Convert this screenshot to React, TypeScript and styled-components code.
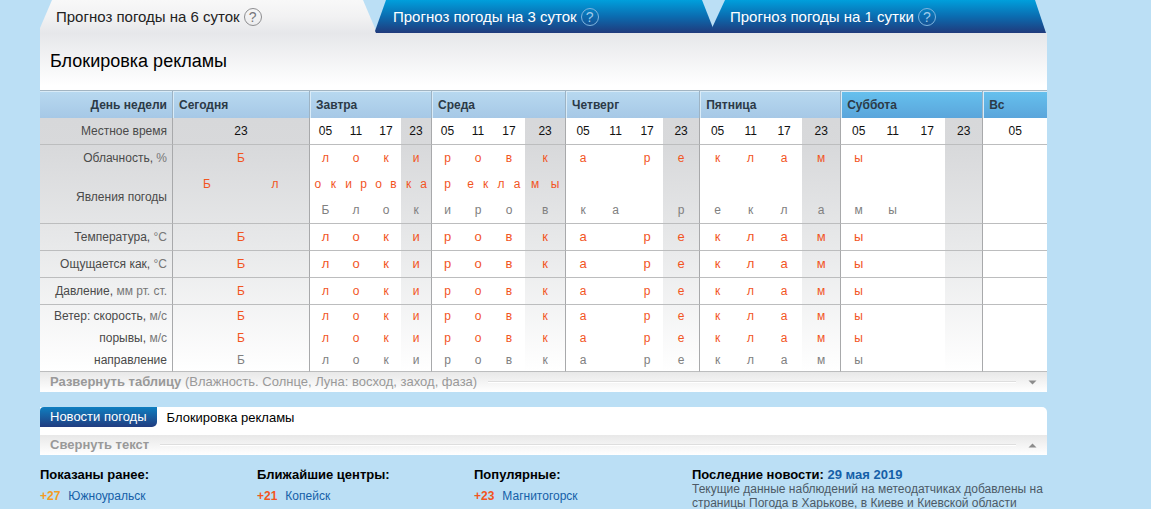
import React from "react";
import styled, { createGlobalStyle, css } from "styled-components";

const GlobalStyle = createGlobalStyle`
  * { box-sizing: border-box; }
  body {
    margin: 0;
    background: #bbdff5;
    color: #000;
    font-family: "Liberation Sans", Arial, sans-serif;
    font-size: 12px;
  }
  a { text-decoration: none; }
  button { font-family: inherit; border: 0; cursor: pointer; }
`;

const Page = styled.div`
  padding: 0 104px 0 40px;
`;

const Tabs = styled.nav`
  display: grid;
  grid-template-columns: 337fr 337fr 333fr;
  height: 33px;
`;

const blueTab = css`
  margin-left: -2px;
  padding-left: 18px;
  color: #fff;
  background: linear-gradient(#009fdc, #0b6cb0 50%, #203a7c);
`;

const Tab = styled.a<{ $kind: "active" | "middle" | "last" }>`
  display: flex;
  align-items: center;
  gap: 4px;
  padding-left: 16px;
  font-size: 15px;
  line-height: 33px;
  white-space: nowrap;
  color: #222;
  ${(p) =>
    p.$kind === "active" &&
    css`
      background: linear-gradient(#f8f8f8, #f2f2f3 50%, #e6e7ea);
      clip-path: polygon(12px 0, calc(100% - 14px) 0, 100% 100%, 0 100%, 0 28px);
    `}
  ${(p) =>
    p.$kind === "middle" &&
    css`
      ${blueTab}
      clip-path: polygon(11px 0, calc(100% - 12px) 0, calc(100% - 1px) 28px, 100% 100%, 1px 100%, 0 31px);
    `}
  ${(p) =>
    p.$kind === "last" &&
    css`
      ${blueTab}
      clip-path: polygon(13px 0, calc(100% - 12px) 0, calc(100% - 1px) 100%, 0 100%, 0 28px);
    `}
`;

const Hint = styled.span<{ $light?: boolean }>`
  display: inline-flex;
  align-items: center;
  justify-content: center;
  width: 18px;
  height: 18px;
  border: 1px solid ${(p) => (p.$light ? "#7fb4de" : "#8d8d8f")};
  border-radius: 50%;
  font-size: 14px;
  line-height: 16px;
  color: ${(p) => (p.$light ? "#9fcbeb" : "#77777a")};
`;

const TitleBar = styled.header`
  display: flex;
  align-items: center;
  height: 57px;
  padding: 0 10px;
  background: linear-gradient(#e6e7ea, #fff 92%);
`;

const Title = styled.h1`
  margin: 0;
  font-size: 18px;
  font-weight: 400;
`;

const Forecast = styled.table`
  width: 100%;
  table-layout: fixed;
  border-collapse: separate;
  border-spacing: 0;
  border-top: 1px solid #a3b5c2;
  background: #fff;
  text-align: center;
  th, td { padding: 0; }
`;

const Column = styled.col<{ $night?: boolean }>`
  ${(p) => p.$night && css`background: linear-gradient(#d6d7d9, #d8d9db 20%, #e8e9ea 55%, #fff);`}
`;

const DayHead = styled.th<{ $weekend?: boolean; $label?: boolean; $last?: boolean }>`
  height: 27px;
  text-align: ${(p) => (p.$label ? "right" : "left")};
  color: #2c3a47;
  font-size: 12px;
  background: ${(p) =>
    p.$weekend ? "linear-gradient(#66c1ee, #5aa5db)" : "linear-gradient(#b8d9f0, #a6c8e6)"};
  border-right: ${(p) => (p.$last ? "0" : "1px solid #9db3c4")};
  box-shadow: inset ${(p) => (p.$label ? "0" : "1px")} 1px 0 #d9ebf7;
  && { padding: ${(p) => (p.$label ? "0 5px 0 0" : "0 0 0 6px")}; }
`;

type Tone = "time" | "warm" | "temp" | "grey";
const toneColor: Record<Tone, string> = { time: "#111", warm: "#f2551f", temp: "#f2551f", grey: "#808080" };

const Row = styled.tr<{ $h: number; $line?: boolean }>`
  height: ${(p) => p.$h}px;
  ${(p) => p.$line && css`td, th { border-bottom: 1px solid #bcbdbe; }`}
`;

const RowLabel = styled.th<{ $line?: boolean }>`
  && {
    padding-right: 5px;
    border-right: 1px solid #a8a9ab;
    ${(p) => p.$line && "border-bottom: 1px solid #bcbdbe;"}
  }
  text-align: right;
  font-weight: 400;
  color: #4a4a4a;
  white-space: nowrap;
`;

const Unit = styled.span`
  color: #777;
`;

const Cell = styled.td<{ $tone: Tone; $edge?: boolean }>`
  color: ${(p) => toneColor[p.$tone]};
  font-size: ${(p) => (p.$tone === "temp" ? 13 : 12)}px;
  line-height: 16px;
  ${(p) => p.$edge && css`border-right: 1px solid #a8a9ab;`}
`;

const Pair = styled.div`
  display: flex;
  span { flex: 1; }
`;

const Strip = styled.button`
  display: flex;
  align-items: center;
  width: 100%;
  height: 20px;
  padding: 0 10px 2px;
  text-align: left;
  color: #999;
  font-size: 13px;
  background: linear-gradient(#e8e8e8, #fff);
  white-space: pre;
`;

const Rule = styled.span`
  flex: 1;
  height: 2px;
  margin: 2px 12px 0 11px;
  border-top: 1px solid #dedede;
  background: #fff;
`;

const News = styled.section`
  margin-top: 15px;
  border-radius: 0 5px 0 0;
  background: #fff;
`;

const NewsLine = styled.div`
  display: flex;
  align-items: flex-start;
  height: 28px;
  font-size: 13px;
  line-height: 20px;
`;

const NewsTag = styled.h2`
  margin: 0 10px 0 0;
  padding: 0 10px;
  font-size: 13px;
  font-weight: 400;
  line-height: 20px;
  color: #fff;
  border-radius: 4px 0 5px 0;
  background: linear-gradient(#0f7fc0, #213c80);
`;

const NewsText = styled.span`
  line-height: 22px;
`;

const Footer = styled.footer`
  display: grid;
  grid-template-columns: 217fr 217fr 218fr 355fr;
  padding-top: 12px;
`;

const Heading = styled.h3`
  margin: 0;
  font-size: 13px;
  line-height: 15px;
  white-space: nowrap;
`;

const Link = styled.a`
  color: #1560a8;
`;

const City = styled.div`
  display: flex;
  gap: 8px;
  margin-top: 7px;
  line-height: 14px;
`;

const Degrees = styled.b<{ $hot?: boolean }>`
  color: ${(p) => (p.$hot ? "#f2551f" : "#f59b23")};
`;

const Story = styled.p`
  margin: 0;
  font-size: 12px;
  line-height: 14px;
  color: #4c5a66;
`;

const ArrowIcon = styled.svg`
  margin-top: 2px;
`;

const Arrow = ({ up }: { up?: boolean }) => (
  <ArrowIcon width="9" height="5" viewBox="0 0 9 5" aria-hidden="true">
    <path d={up ? "M4.500 0.500L8.500 4.500H0.500Z" : "M0.500 0.500H8.500L4.500 4.500Z"} fill="#8c8c8c" />
  </ArrowIcon>
);

const columnWidths = [133, 137, 31, 30, 30, 31, 31, 30, 32, 41, 34, 31, 32, 37, 35, 31, 36, 39, 35, 33, 36, 38, 64];
const nightColumns = [0, 1, 5, 9, 13, 17, 21];
const dayEdges = [0, 4, 8, 12, 16, 20];

const days = [
  { name: "Сегодня", span: 1 },
  { name: "Завтра", span: 4 },
  { name: "Среда", span: 4 },
  { name: "Четверг", span: 4 },
  { name: "Пятница", span: 4 },
  { name: "Суббота", span: 4, weekend: true },
  { name: "Вс", span: 1, weekend: true },
];

const message = "Блокировка рекламы";
const letters = (text: string, lead = 0) =>
  Array.from({ length: 22 }, (_, i) => (i < lead ? "" : (text[i - lead] ?? "").trim()));

const times = ["23", ...Array.from({ length: 20 }, (_, i) => ["05", "11", "17", "23"][i % 4]), "05"];
const phenomena = ["Бл", "ок", "ир", "ов", "ка", "р", "ек", "ла", "мы"];

interface RowData {
  label?: string;
  unit?: string;
  span?: number;
  height: number;
  line?: boolean;
  tone: Tone;
  cells: string[];
}

const rows: RowData[] = [
  { label: "Местное время", height: 27, line: true, tone: "time", cells: times },
  { label: "Облачность,", unit: "%", height: 26, tone: "warm", cells: letters(message) },
  {
    label: "Явления погоды",
    span: 2,
    height: 26,
    tone: "warm",
    cells: Array.from({ length: 22 }, (_, i) => phenomena[i] ?? ""),
  },
  { height: 27, line: true, tone: "grey", cells: letters(message, 1) },
  { label: "Температура,", unit: "°C", height: 27, line: true, tone: "temp", cells: letters(message) },
  { label: "Ощущается как,", unit: "°C", height: 27, line: true, tone: "temp", cells: letters(message) },
  { label: "Давление,", unit: "мм рт. ст.", height: 27, line: true, tone: "warm", cells: letters(message) },
  { label: "Ветер: скорость,", unit: "м/с", height: 22, tone: "warm", cells: letters(message) },
  { label: "порывы,", unit: "м/с", height: 22, tone: "warm", cells: letters(message) },
  { label: "направление", height: 23, line: true, tone: "grey", cells: letters(message) },
];

const cities = [
  { title: "Показаны ранее:", value: "+27", city: "Южноуральск", hot: false },
  { title: "Ближайшие центры:", value: "+21", city: "Копейск", hot: true },
  { title: "Популярные:", value: "+23", city: "Магнитогорск", hot: true },
];

const CellText = ({ text, tone }: { text: string; tone: Tone }) =>
  text.length === 2 && tone !== "time" ? (
    <Pair>
      <span>{text[0]}</span>
      <span>{text[1]}</span>
    </Pair>
  ) : (
    <>{text}</>
  );

export default function App() {
  return (
    <Page>
      <GlobalStyle />
      <Tabs>
        <Tab href="#6" $kind="active">Прогноз погоды на 6 суток <Hint>?</Hint></Tab>
        <Tab href="#3" $kind="middle">Прогноз погоды на 3 суток <Hint $light>?</Hint></Tab>
        <Tab href="#1" $kind="last">Прогноз погоды на 1 сутки <Hint $light>?</Hint></Tab>
      </Tabs>
      <TitleBar>
        <Title>Блокировка рекламы</Title>
      </TitleBar>
      <Forecast>
        <colgroup>
          {columnWidths.map((w, i) => (
            <Column key={i} width={w} $night={nightColumns.includes(i)} />
          ))}
        </colgroup>
        <thead>
          <tr>
            <DayHead $label>День недели</DayHead>
            {days.map((d, i) => (
              <DayHead key={d.name} colSpan={d.span} $weekend={d.weekend} $last={i === days.length - 1}>
                {d.name}
              </DayHead>
            ))}
          </tr>
        </thead>
        <tbody>
          {rows.map((r, n) => (
            <Row key={n} $h={r.height} $line={r.line}>
              {r.label && (
                <RowLabel scope="row" rowSpan={r.span} $line={r.span === 2}>
                  {r.label} {r.unit && <Unit>{r.unit}</Unit>}
                </RowLabel>
              )}
              {r.cells.map((c, i) => (
                <Cell key={i} $tone={r.tone} $edge={dayEdges.includes(i)}>
                  <CellText text={c} tone={r.tone} />
                </Cell>
              ))}
            </Row>
          ))}
        </tbody>
      </Forecast>
      <Strip type="button">
        <b>Развернуть таблицу</b> (Влажность. Солнце, Луна: восход, заход, фаза)
        <Rule />
        <Arrow />
      </Strip>
      <News>
        <NewsLine>
          <NewsTag>Новости погоды</NewsTag>
          <NewsText>Блокировка рекламы</NewsText>
        </NewsLine>
        <Strip type="button">
          <b>Свернуть текст</b>
          <Rule />
          <Arrow up />
        </Strip>
      </News>
      <Footer>
        {cities.map((c) => (
          <section key={c.title}>
            <Heading>{c.title}</Heading>
            <City>
              <Degrees $hot={c.hot}>{c.value}</Degrees>
              <Link href="#city">{c.city}</Link>
            </City>
          </section>
        ))}
        <section>
          <Heading>Последние новости: <Link href="#news">29 мая 2019</Link></Heading>
          <Story>
            Текущие данные наблюдений на метеодатчиках добавлены на страницы Погода в Харькове, в Киеве и
            Киевской области
          </Story>
        </section>
      </Footer>
    </Page>
  );
}
